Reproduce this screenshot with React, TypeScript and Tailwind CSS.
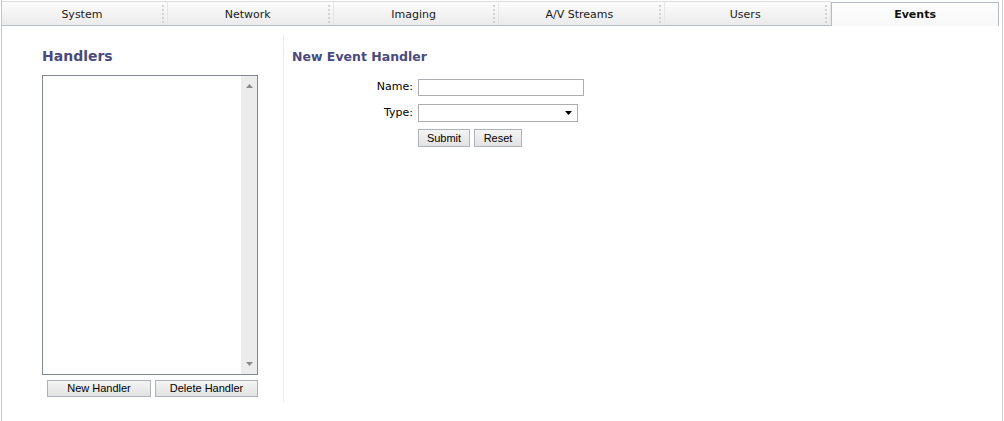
import React from "react";

const tabs = ["System", "Network", "Imaging", "A/V Streams", "Users", "Events"];

function Tab({ label, active }: { label: string; active: boolean }) {
  if (active) {
    return (
      <div className="flex-1 h-[24px] self-end bg-gradient-to-b from-white to-[#f7f7f7] border-l border-t border-r border-[#b4bcc7] flex items-center justify-center pt-[2px]">
        <span className="text-[11px] font-bold text-[#111]">{label}</span>
      </div>
    );
  }
  return (
    <div className="flex-1 h-full flex items-stretch bg-gradient-to-b from-[#fcfcfc] to-[#ebebeb] border-b border-[#b4bcc7] border-t border-t-[#dedede]">
      <div className="flex-1 flex items-center justify-center pt-[3px]">
        <span className="text-[11px] text-[#1a1a1a]">{label}</span>
      </div>
      <div className="w-[2px] self-center h-[18px] bg-[repeating-linear-gradient(to_bottom,#d2d2d2_0px,#d2d2d2_2px,transparent_2px,transparent_4px)]" />
      <div className="w-[3px]" />
      <div className="w-px bg-[#e6e6e6]" />
    </div>
  );
}

function Btn({ children, w }: { children: React.ReactNode; w: string }) {
  return (
    <button
      className={`${w} h-[17px] border border-[#adb2b8] bg-gradient-to-b from-[#f4f4f4] to-[#e2e2e2] text-[11px] leading-none text-black flex items-center justify-center`}
      style={{ fontFamily: '"Liberation Sans", Arial, sans-serif' }}
    >
      {children}
    </button>
  );
}

export default function App() {
  return (
    <div
      className="w-[1004px] h-[421px] bg-white overflow-hidden"
      style={{ fontFamily: '"DejaVu Sans", Verdana, sans-serif' }}
    >
      <div className="ml-px w-[1002px] h-[421px] border-l border-[#c4c4c4] border-r border-r-[#cfcfcf] flex flex-col">
        {/* Tab bar */}
        <div className="flex h-[25px] shrink-0">
          <div className="flex w-[997px] h-full mt-px">
            {tabs.map((t) => (
              <Tab key={t} label={t} active={t === "Events"} />
            ))}
          </div>
          <div className="flex-1" />
        </div>

        {/* Content */}
        <div className="flex flex-1">
          {/* Left column */}
          <div className="ml-[40px] w-[216px] flex flex-col">
            <div className="mt-[22px] h-[18px] leading-[18px] text-[14px] font-bold text-[#4a4a7c]">Handlers</div>
            <div className="mt-[10px] h-[300px] border border-[#828790] flex">
              <div className="flex-1 bg-white" />
              <div className="w-[16px] bg-[#ececec] flex flex-col items-center justify-between py-[8px]">
                <svg width="7" height="4" viewBox="0 0 7 4"><path d="M3.5 0 L7 4 L0 4 Z" fill="#8a8a8a" /></svg>
                <svg width="7" height="4" viewBox="0 0 7 4"><path d="M0 0 L7 0 L3.5 4 Z" fill="#8a8a8a" /></svg>
              </div>
            </div>
            <div className="mt-[5px] flex pl-[5px] gap-[4px]">
              <Btn w="w-[104px]">New Handler</Btn>
              <Btn w="w-[103px]">Delete Handler</Btn>
            </div>
          </div>

          {/* Right column */}
          <div className="ml-[25px] mt-[10px] h-[367px] border-l border-[#ececec] pl-[8px] pt-[14px] flex flex-col">
            <div className="h-[16px] leading-[16px] text-[12.5px] font-bold text-[#4a4a7c]">New Event Handler</div>
            <div className="mt-[14px] flex items-center">
              <div className="w-[121px] text-right text-[11px] text-black">Name:</div>
              <div className="ml-[5px] w-[166px] h-[17px] border border-[#abadb3] bg-white" />
            </div>
            <div className="mt-[8px] flex items-center">
              <div className="w-[121px] text-right text-[11px] text-black">Type:</div>
              <div className="ml-[5px] w-[160px] h-[18px] border border-[#abadb3] bg-white flex items-center justify-end pr-[5px]">
                <svg width="7" height="4" viewBox="0 0 7 4"><path d="M0 0 L7 0 L3.5 4 Z" fill="#000" /></svg>
              </div>
            </div>
            <div className="mt-[7px] flex pl-[126px] gap-[4px]">
              <button
                className="w-[52px] h-[18px] border border-[#adb2b8] bg-gradient-to-b from-[#f4f4f4] to-[#e2e2e2] text-[11px] leading-none text-black flex items-center justify-center"
                style={{ fontFamily: '"Liberation Sans", Arial, sans-serif' }}
              >
                Submit
              </button>
              <button
                className="w-[48px] h-[18px] border border-[#adb2b8] bg-gradient-to-b from-[#f4f4f4] to-[#e2e2e2] text-[11px] leading-none text-black flex items-center justify-center"
                style={{ fontFamily: '"Liberation Sans", Arial, sans-serif' }}
              >
                Reset
              </button>
            </div>
          </div>
        </div>
      </div>
    </div>
  );
}
